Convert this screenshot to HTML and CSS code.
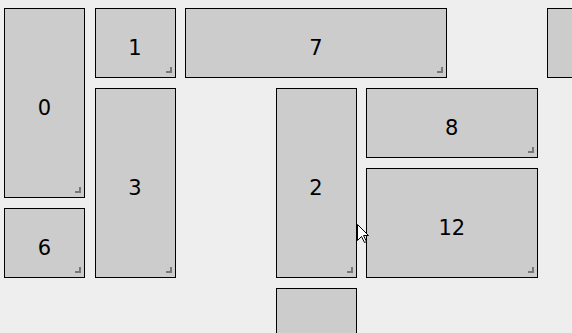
FILE: index.html
```html
<!DOCTYPE html>
<html lang="en">
<head>
  <meta charset="UTF-8">
  <meta name="viewport" content="width=device-width, initial-scale=1.0">
  <title>Grid</title>
  <link rel="stylesheet" href="styles.css">
</head>
<body>
  <div class="grid">
    <div class="item" style="grid-column: 1 / span 1; grid-row: 1 / span 5;">0<span class="handle"></span></div>
    <div class="item" style="grid-column: 2 / span 1; grid-row: 1 / span 2;">1<span class="handle"></span></div>
    <div class="item" style="grid-column: 3 / span 3; grid-row: 1 / span 2;">7<span class="handle"></span></div>
    <div class="item" style="grid-column: 7 / span 1; grid-row: 1 / span 2;"><span class="handle"></span></div>
    <div class="item" style="grid-column: 2 / span 1; grid-row: 3 / span 5;">3<span class="handle"></span></div>
    <div class="item" style="grid-column: 4 / span 1; grid-row: 3 / span 5;">2<span class="handle"></span></div>
    <div class="item" style="grid-column: 5 / span 2; grid-row: 3 / span 2;">8<span class="handle"></span></div>
    <div class="item" style="grid-column: 5 / span 2; grid-row: 5 / span 3;">12<span class="handle"></span></div>
    <div class="item" style="grid-column: 1 / span 1; grid-row: 6 / span 2;">6<span class="handle"></span></div>
    <div class="item" style="grid-column: 4 / span 1; grid-row: 8 / span 5;"><span class="handle"></span></div>
  </div>

  <!-- mouse pointer -->
  <svg class="cursor" width="13" height="20" viewBox="0 0 13 20">
    <path d="M0.5 0.5 L0.5 16.5 L4.5 12.5 L7.5 18.5 L9.5 17.5 L6.5 11.5 L11.5 11.5 Z" fill="#fff" stroke="#000" stroke-width="1"/>
  </svg>
</body>
</html>
```

FILE: styles.css
```css
html, body {
  margin: 0;
  padding: 0;
  overflow: hidden;
  height: 100%;
}

body {
  background: #eee;
  font-family: 'DejaVu Sans', Verdana, sans-serif;
  color: #000;
  position: relative;
}

.grid {
  display: grid;
  grid-template-columns: repeat(7, 81px);
  grid-auto-rows: 30px;
  gap: 10px 9.5px;
  padding: 8px 0 0 4px;
}

.item {
  position: relative;
  box-sizing: border-box;
  background: #ccc;
  border: 1px solid #000;
  display: flex;
  justify-content: center;
  align-items: center;
  padding-top: 9px;
  font-size: 21px;
}

.handle {
  position: absolute;
  right: 3px;
  bottom: 4px;
  width: 4px;
  height: 4px;
  border-right: 2px solid #777;
  border-bottom: 2px solid #777;
}

.cursor {
  position: absolute;
  left: 357px;
  top: 224px;
}
```
